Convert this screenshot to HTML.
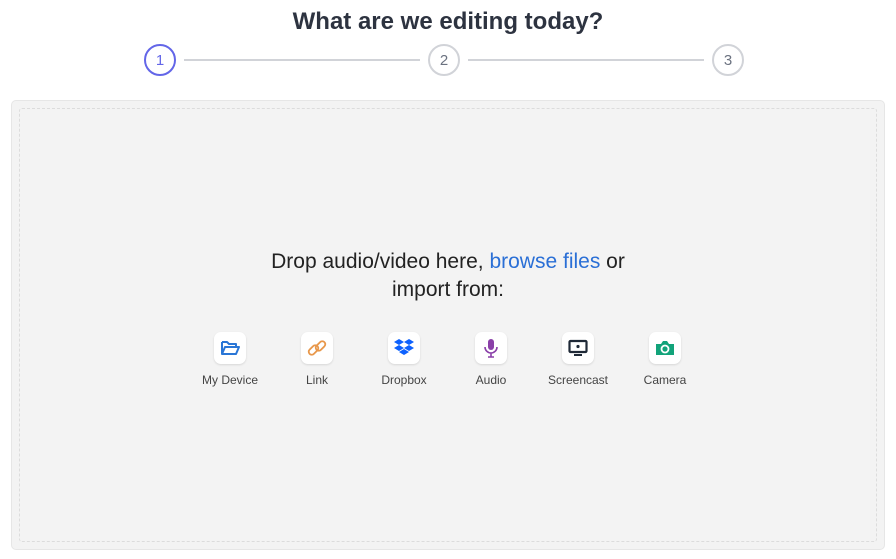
<!DOCTYPE html>
<html><head><style>
body{margin:0;width:896px;height:559px;background:#fff;font-family:"Liberation Sans",sans-serif;position:relative;overflow:hidden}
h1{position:absolute;top:8px;left:0;width:896px;text-align:center;margin:0;font-size:24px;font-weight:bold;color:#2d3340}
.c{position:absolute;top:44px;width:28px;height:28px;border:2px solid #d1d3d8;border-radius:50%;text-align:center;line-height:30px;font-size:15px;color:#6b7280;background:#fff}
.l{position:absolute;top:59px;height:2px;background:#d1d3d8}
.panel{position:absolute;left:11px;top:100px;width:872px;height:448px;background:#f3f3f3;border:1px solid #e6e6e6;border-radius:5px}
.inner{position:absolute;left:7px;top:7px;right:7px;bottom:7px;border:1px dashed #dcdcdc;border-radius:3px}
.txt{position:absolute;left:0;width:896px;top:248px;text-align:center;font-size:21px;line-height:28px;color:#222}
.txt a{color:#2a6fd6}
.it{position:absolute;top:332px;width:80px;text-align:center}
.box{width:32px;height:32px;margin:0 auto;background:#fff;border-radius:7px;box-shadow:0 1px 2px rgba(0,0,0,.12);display:flex;align-items:center;justify-content:center}
.lb{font-size:12px;color:#444;margin-top:9px}
</style></head><body>
<h1>What are we editing today?</h1>
<div class="l" style="left:184px;width:236px"></div>
<div class="l" style="left:468px;width:236px"></div>
<div class="c" style="left:144px;border-color:#6366e8;color:#6366e8">1</div>
<div class="c" style="left:428px">2</div>
<div class="c" style="left:712px">3</div>
<div class="panel"><div class="inner"></div></div>
<div class="txt">Drop audio/video here, <a>browse files</a> or<br>import from:</div>
<div class="it" style="left:190px"><div class="box"><svg width="20" height="18" viewBox="0 0 20 18"><path d="M2 3h5l2 2h7v3M2 3v12h14l3-7H5L2 15" fill="none" stroke="#2a76d6" stroke-width="2" stroke-linejoin="round"/></svg></div><div class="lb">My Device</div></div>
<div class="it" style="left:277px"><div class="box"><svg width="20" height="20" viewBox="0 0 20 20" fill="none" stroke="#e8974a" stroke-width="1.8"><rect x="1" y="9" width="11" height="6" rx="3" transform="rotate(-45 6.5 12)"/><rect x="8" y="5" width="11" height="6" rx="3" transform="rotate(-45 13.5 8)"/></svg></div><div class="lb">Link</div></div>
<div class="it" style="left:364px"><div class="box"><svg width="22" height="20" viewBox="0 0 22 20" fill="#0d61fe"><path d="M6 1l5 3-5 3-5-3zM16 1l5 3-5 3-5-3zM6 7l5 3-5 3-5-3zM16 7l5 3-5 3-5-3zM6 14l5-3 5 3-5 3z"/></svg></div><div class="lb">Dropbox</div></div>
<div class="it" style="left:451px"><div class="box"><svg width="16" height="20" viewBox="0 0 16 20"><rect x="5" y="1" width="6" height="11" rx="3" fill="#8a3fa8"/><path d="M2 9a6 6 0 0 0 12 0M8 15v4M5 19h6" fill="none" stroke="#8a3fa8" stroke-width="1.6"/></svg></div><div class="lb">Audio</div></div>
<div class="it" style="left:538px"><div class="box"><svg width="20" height="18" viewBox="0 0 20 18"><rect x="1.5" y="2" width="17" height="11" rx="1" fill="none" stroke="#1f2937" stroke-width="2.2"/><circle cx="10" cy="7.5" r="1.6" fill="#1f2937"/><path d="M6 16h8" stroke="#1f2937" stroke-width="2"/></svg></div><div class="lb">Screencast</div></div>
<div class="it" style="left:625px"><div class="box"><svg width="20" height="18" viewBox="0 0 20 18"><path d="M1 5h5l2-3h4l2 3h5v11H1z" fill="#12a37a"/><circle cx="10" cy="10" r="3.5" fill="none" stroke="#fff" stroke-width="1.8"/></svg></div><div class="lb">Camera</div></div>
</body></html>
